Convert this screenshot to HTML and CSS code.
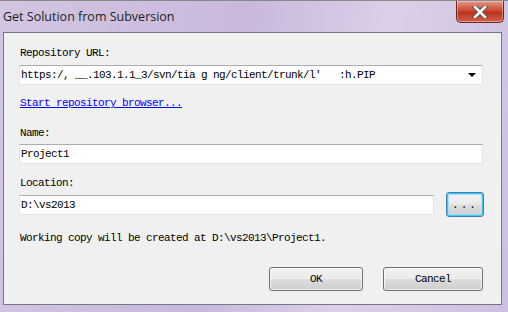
FILE: index.html
```html
<!DOCTYPE html>
<html>
<head>
  <title>Get Solution from Subversion</title>
  <link rel="stylesheet" href="styles.css">
</head>
<body>
  <div class="window">
    <div class="titlebar">
      <span class="title">Get Solution from Subversion</span>
      <button class="close" aria-label="Close">
        <svg width="16" height="12" viewBox="0 0 16 12">
          <path d="M3 1 L13 11 M13 1 L3 11" stroke="#4a4a4a" stroke-width="4.2" stroke-linecap="square"/>
          <path d="M3 1 L13 11 M13 1 L3 11" stroke="#fff" stroke-width="2.6" stroke-linecap="square"/>
        </svg>
      </button>
    </div>
    <div class="panel">
      <label class="label">Repository URL:</label>
      <div class="combo">
        <span class="field-text">https:/, __.103.1.1_3/svn/tia g ng/client/trunk/l'   :h.PIP</span>
        <span class="arrow"></span>
      </div>
      <a class="link" href="#">Start repository browser...</a>

      <label class="label name-label">Name:</label>
      <div class="field">
        <span class="field-text">Project1</span>
      </div>

      <label class="label location-label">Location:</label>
      <div class="location-row">
        <div class="field location-field">
          <span class="field-text">D:\vs2013</span>
        </div>
        <button class="btn browse">...</button>
      </div>

      <p class="note">Working copy will be created at D:\vs2013\Project1.</p>

      <div class="actions">
        <button class="btn ok">OK</button>
        <button class="btn cancel">Cancel</button>
      </div>
    </div>
  </div>
</body>
</html>
```

FILE: styles.css
```css
body {
  margin: 0;
  padding: 0;
  background: #cbbddc;
  font-family: "Liberation Mono", "DejaVu Sans Mono", monospace;
}

.window {
  width: 508px;
  height: 312px;
  background: linear-gradient(100deg, #d2c5e2 0%, #c9b8dc 45%, #dcd0e8 70%, #cdbfdf 100%);
  border-top: 1px solid #8a8a8a;
  box-sizing: border-box;
  overflow: hidden;
}

.titlebar {
  height: 31px;
  display: flex;
  align-items: flex-start;
  justify-content: space-between;
}

.title {
  font-family: "Open Sans", "DejaVu Sans", sans-serif;
  font-size: 12.5px;
  color: #1e1e1e;
  margin: 8px 0 0 3px;
  line-height: 16px;
}

.close {
  width: 48px;
  height: 22px;
  margin: 0 4px 0 0;
  padding: 0;
  border: 1px solid #6b2a22;
  border-top: none;
  border-radius: 0 0 5px 5px;
  background: linear-gradient(#e09a8c 0%, #cc4a35 45%, #b8321c 55%, #d0624c 100%);
  box-shadow: inset 0 0 0 1px rgba(255, 255, 255, 0.35);
  display: flex;
  align-items: center;
  justify-content: center;
}

.panel {
  margin-left: 3px;
  width: 499px;
  height: 273px;
  box-sizing: border-box;
  background: #f0f0f0;
  border: 1px solid #7a7488;
  padding: 13px 18px 0 15px;
  display: flex;
  flex-direction: column;
  align-items: flex-start;
}

.label {
  font-size: 11px;
  letter-spacing: -0.6px;
  line-height: 14px;
  color: #000;
  padding-left: 1px;
}

.combo,
.field {
  height: 20px;
  width: 464px;
  box-sizing: border-box;
  background: #fff;
  border: 1px solid #e2e6ec;
  border-top-color: #abadb3;
  display: flex;
  align-items: center;
  position: relative;
}

.combo {
  margin-top: 5px;
}

.field-text {
  font-size: 11px;
  letter-spacing: -0.6px;
  white-space: pre;
  color: #000;
  padding-left: 1px;
  line-height: 14px;
}

.arrow {
  position: absolute;
  right: 6px;
  top: 7px;
  width: 0;
  height: 0;
  border-left: 4px solid transparent;
  border-right: 4px solid transparent;
  border-top: 4px solid #000;
}

.link {
  margin-top: 11px;
  font-size: 11px;
  letter-spacing: -0.6px;
  line-height: 14px;
  color: #0000ff;
  text-decoration: underline;
  padding-left: 1px;
}

.name-label {
  margin-top: 16px;
}

.field {
  margin-top: 4px;
}

.location-label {
  margin-top: 12px;
}

.location-row {
  margin-top: 2px;
  display: flex;
  align-items: center;
  gap: 12px;
}

.location-field {
  margin-top: 0;
  width: 415px;
  height: 20px;
}

.btn {
  font-family: "Liberation Mono", "DejaVu Sans Mono", monospace;
  font-size: 11px;
  letter-spacing: -0.6px;
  color: #000;
  height: 24px;
  box-sizing: border-box;
  border: 1px solid #707070;
  border-radius: 3px;
  background: linear-gradient(#f2f2f2 0%, #ebebeb 48%, #dddddd 52%, #cfcfcf 100%);
  box-shadow: inset 0 0 0 1px rgba(255, 255, 255, 0.7);
  padding: 0;
}

.browse {
  width: 38px;
  height: 25px;
  border-color: #3c7fb1;
  box-shadow: inset 0 0 0 1px #48c4f2, inset 0 0 0 2px #a6e0f7;
  letter-spacing: 2px;
}

.note {
  margin: 14px 0 0 0;
  font-size: 11px;
  letter-spacing: -0.6px;
  line-height: 14px;
  color: #000;
  padding-left: 1px;
}

.actions {
  margin-top: 22px;
  align-self: stretch;
  display: flex;
  justify-content: flex-end;
  gap: 20px;
}

.ok {
  width: 94px;
}

.cancel {
  width: 100px;
}
```
